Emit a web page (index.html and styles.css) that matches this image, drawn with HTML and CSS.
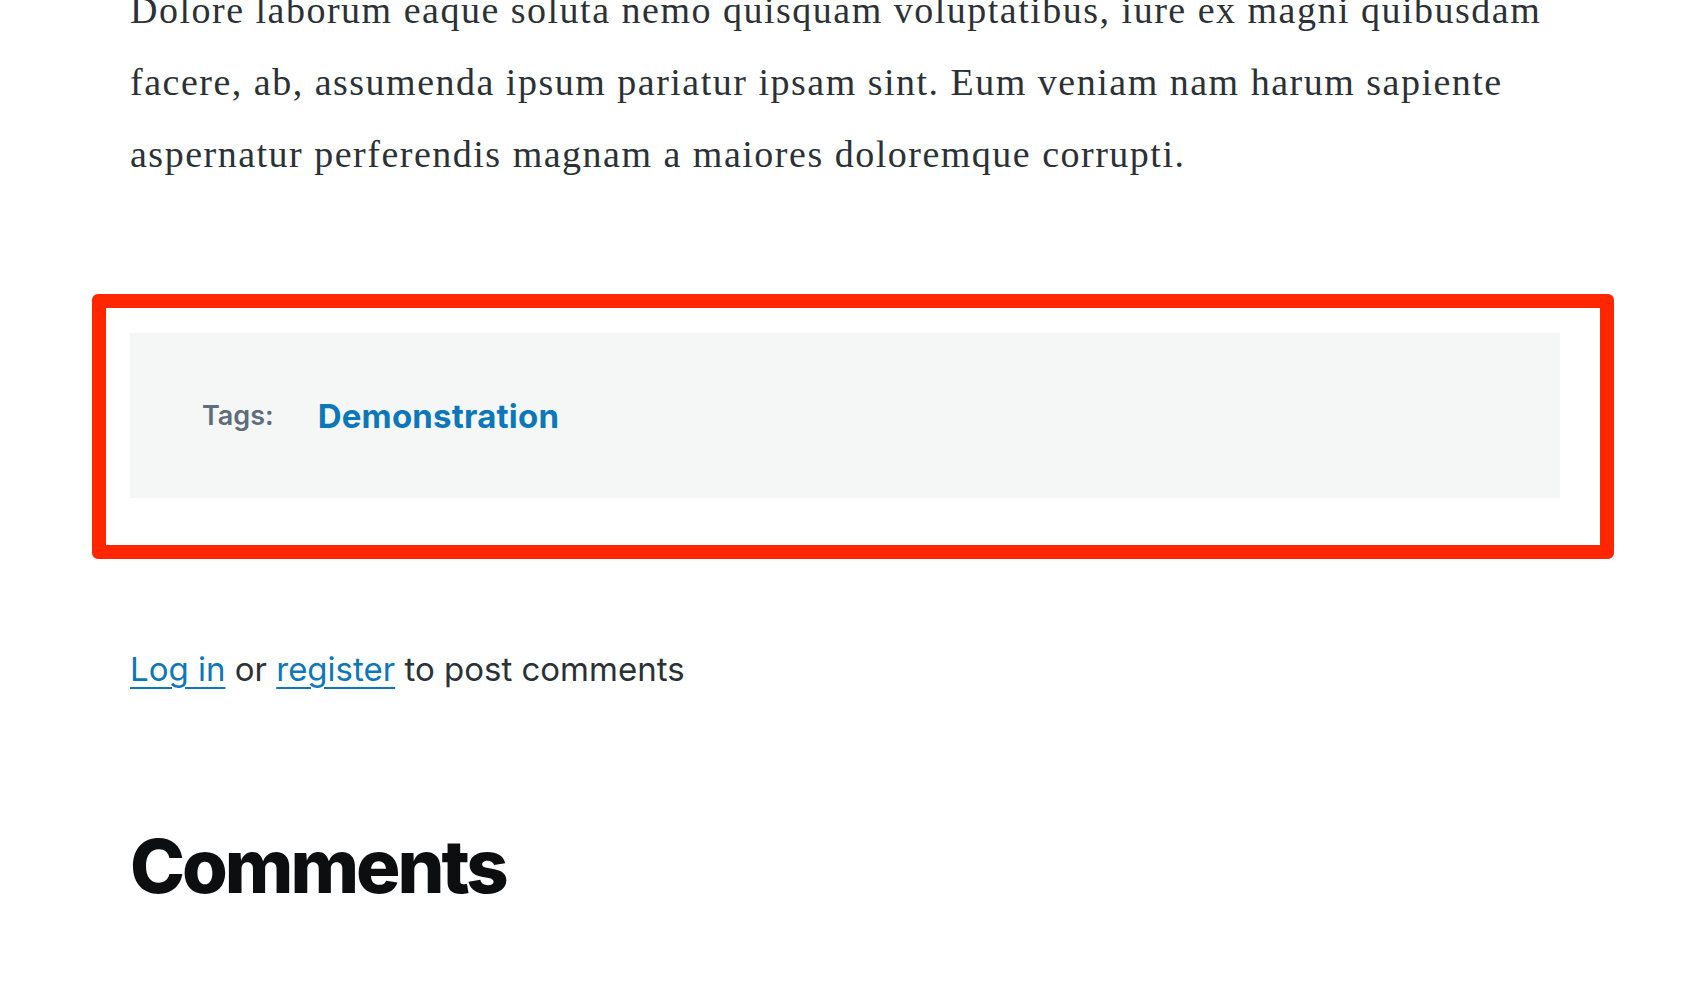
FILE: index.html
```html
<!DOCTYPE html>
<html lang="en">
<head>
<meta charset="utf-8">
<title>Article</title>
<link rel="stylesheet" href="styles.css">
</head>
<body>
<main class="page">
  <p class="body-text">Dolore laborum eaque soluta nemo quisquam voluptatibus, iure ex magni quibusdam facere, ab, assumenda ipsum pariatur ipsam sint. Eum veniam nam harum sapiente aspernatur perferendis magnam a maiores doloremque corrupti.</p>

  <div class="highlight">
    <div class="tags">
      <span class="tags-label">Tags:</span>
      <a class="tag-link" href="#">Demonstration</a>
    </div>
  </div>

  <p class="login-note"><a href="#">Log in</a> or <a href="#">register</a> to post comments</p>

  <h2 class="comments-title">Comments</h2>
</main>
</body>
</html>
```

FILE: styles.css
```css
html, body {
  margin: 0;
  padding: 0;
  background: #ffffff;
}

.page {
  margin-top: -26px;
  padding-left: 130px;
  width: 1430px;
}

.body-text {
  margin: 0;
  font-family: "Liberation Serif", "DejaVu Serif", serif;
  font-size: 38px;
  line-height: 72px;
  letter-spacing: 1.5px;
  color: #2b3136;
}

.highlight {
  margin: 104px -54px 0 -38px;
  border: 14px solid #ff2600;
  border-radius: 6px;
  padding: 25px 40px 47px 24px;
}

.tags {
  height: 165px;
  background: #f5f7f7;
  display: flex;
  align-items: center;
  padding-left: 72px;
  gap: 44px;
  font-family: "Inter", "Lato", sans-serif;
}

.tags-label {
  font-size: 27px;
  font-weight: 600;
  color: #5e6d7b;
}

.tag-link {
  font-size: 33px;
  font-weight: 700;
  letter-spacing: 0.2px;
  color: #0d77b7;
  text-decoration: none;
}

.login-note {
  margin: 86px 0 0;
  font-family: "Inter", "Lato", sans-serif;
  font-size: 33px;
  line-height: 48px;
  color: #2b3136;
}

.login-note a {
  color: #0d77b7;
  text-decoration: underline;
  text-decoration-thickness: 2px;
  text-underline-offset: 6px;
}

.comments-title {
  margin: 125px 0 0;
  font-family: "Inter", "Lato", sans-serif;
  font-size: 74px;
  line-height: 96px;
  font-weight: 800;
  color: #0d0e10;
  letter-spacing: -3px;
}
```
